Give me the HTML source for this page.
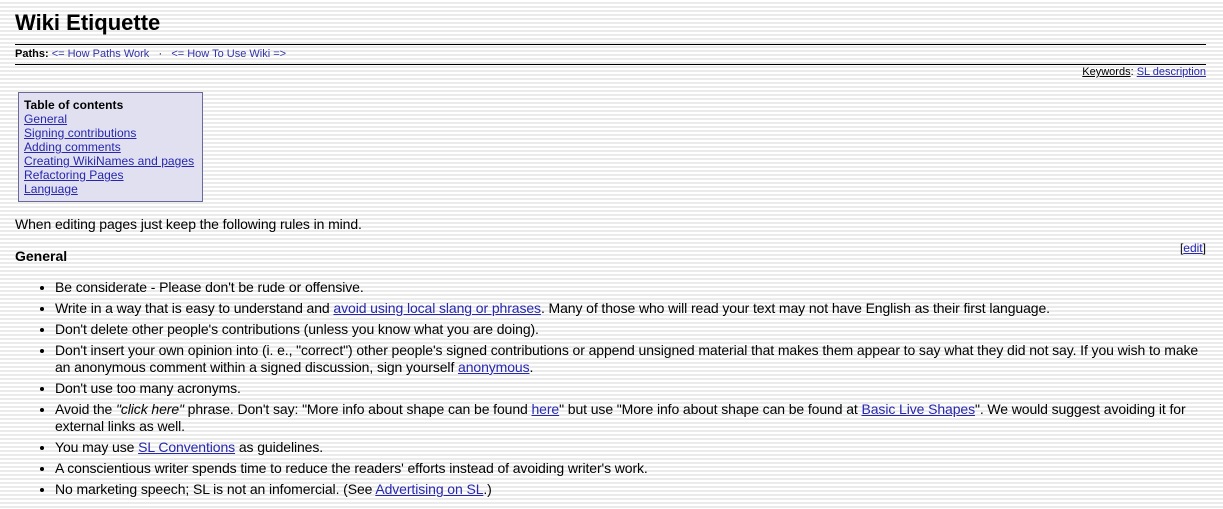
<!DOCTYPE html>
<html><head><meta charset="utf-8"><style>
html,body{margin:0;padding:0}
body{width:1223px;height:509px;overflow:hidden;font-family:"Liberation Sans",Arial,sans-serif;color:#000;
background:repeating-linear-gradient(to bottom,#fff 0,#fff 2px,#ebebeb 2px,#ebebeb 4px);position:relative}
a{color:#2626b0}
.abs{position:absolute}
h1{position:absolute;left:15px;top:9px;margin:0;font-size:22px;font-weight:bold;line-height:28px}
.hr{position:absolute;left:15px;width:1191px;height:1px;background:#000}
.paths{left:15px;top:47px;font-size:11px;line-height:14px}
.paths a{text-decoration:none;color:#3333aa}
.kw{right:17px;top:65px;font-size:11px;line-height:14px}
.kw a.k{color:#000}
.toc{left:18px;top:92px;width:185px;height:110px;border:1px solid #6a6a9a;background:#e0e0f0;box-sizing:border-box;padding:5px 5px;font-size:12px;line-height:14px;letter-spacing:0.05px}
.toc b{display:block}
.toc a{display:block}
.p{left:15px;top:216px;font-size:14px;line-height:17px;letter-spacing:-0.1px}
.h2{left:15px;top:248px;font-size:14px;font-weight:bold;line-height:17px}
.edit{right:17px;top:241px;font-size:12px;line-height:14px}
ul{position:absolute;left:15px;top:279px;width:1191px;margin:0;padding:0 0 0 40px;box-sizing:border-box;font-size:14px;line-height:17px;letter-spacing:-0.1px}
li{margin-bottom:4px}
</style></head><body>
<h1>Wiki Etiquette</h1>
<div class="hr" style="top:44px"></div>
<div class="abs paths"><b>Paths:</b> <a href="#">&lt;= How Paths Work</a> &nbsp; · &nbsp; <a href="#">&lt;= How To Use Wiki =&gt;</a></div>
<div class="hr" style="top:64px"></div>
<div class="abs kw"><a class="k" href="#">Keywords</a>: <a href="#">SL description</a></div>
<div class="abs toc"><b>Table of contents</b>
<a href="#">General</a><a href="#">Signing contributions</a><a href="#">Adding comments</a><a href="#">Creating WikiNames and pages</a><a href="#">Refactoring Pages</a><a href="#">Language</a></div>
<div class="abs p">When editing pages just keep the following rules in mind.</div>
<div class="abs h2">General</div>
<div class="abs edit">[<a href="#">edit</a>]</div>
<ul>
<li>Be considerate - Please don't be rude or offensive.</li>
<li>Write in a way that is easy to understand and <a href="#">avoid using local slang or phrases</a>. Many of those who will read your text may not have English as their first language.</li>
<li>Don't delete other people's contributions (unless you know what you are doing).</li>
<li>Don't insert your own opinion into (i. e., "correct") other people's signed contributions or append unsigned material that makes them appear to say what they did not say. If you wish to make an anonymous comment within a signed discussion, sign yourself <a href="#">anonymous</a>.</li>
<li>Don't use too many acronyms.</li>
<li>Avoid the <i>"click here"</i> phrase. Don't say: "More info about shape can be found <a href="#">here</a>" but use "More info about shape can be found at <a href="#">Basic Live Shapes</a>". We would suggest avoiding it for external links as well.</li>
<li>You may use <a href="#">SL Conventions</a> as guidelines.</li>
<li>A conscientious writer spends time to reduce the readers' efforts instead of avoiding writer's work.</li>
<li>No marketing speech; SL is not an infomercial. (See <a href="#">Advertising on SL</a>.)</li>
</ul>
</body></html>
